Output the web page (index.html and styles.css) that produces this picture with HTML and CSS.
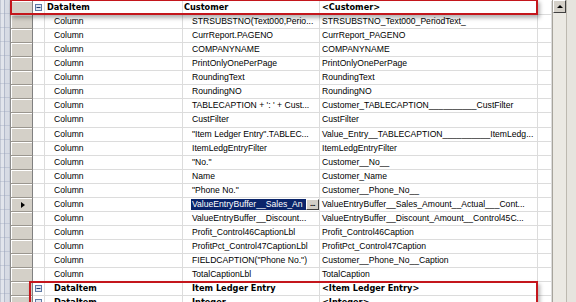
FILE: index.html
```html
<!DOCTYPE html>
<html>
<head>
<meta charset="utf-8">
<link rel="stylesheet" href="styles.css">
</head>
<body>
<div class="window">
  <div class="frame-left"></div>
  <div class="table">
    <div class="row top">
      <div class="sel"></div>
      <div class="exp"><svg width="7" height="7" viewBox="0 0 7 7"><rect x="0.5" y="0.5" width="6" height="6" fill="#dfe6f1" stroke="#5f7aa6"/><path d="M1.5 3.5H5.5" stroke="#1c3a6b"/></svg></div>
      <div class="c1 b">DataItem</div>
      <div class="c2 b">Customer</div>
      <div class="c3 b">&lt;Customer&gt;</div>
      <div class="cx"></div>
    </div>
    <div class="row"><div class="sel"></div><div class="exp"></div><div class="c1">Column</div><div class="c2">STRSUBSTNO(Text000,Perio...</div><div class="c3">STRSUBSTNO_Text000_PeriodText_</div><div class="cx"></div></div>
    <div class="row"><div class="sel"></div><div class="exp"></div><div class="c1">Column</div><div class="c2">CurrReport.PAGENO</div><div class="c3">CurrReport_PAGENO</div><div class="cx"></div></div>
    <div class="row"><div class="sel"></div><div class="exp"></div><div class="c1">Column</div><div class="c2">COMPANYNAME</div><div class="c3">COMPANYNAME</div><div class="cx"></div></div>
    <div class="row"><div class="sel"></div><div class="exp"></div><div class="c1">Column</div><div class="c2">PrintOnlyOnePerPage</div><div class="c3">PrintOnlyOnePerPage</div><div class="cx"></div></div>
    <div class="row"><div class="sel"></div><div class="exp"></div><div class="c1">Column</div><div class="c2">RoundingText</div><div class="c3">RoundingText</div><div class="cx"></div></div>
    <div class="row"><div class="sel"></div><div class="exp"></div><div class="c1">Column</div><div class="c2">RoundingNO</div><div class="c3">RoundingNO</div><div class="cx"></div></div>
    <div class="row"><div class="sel"></div><div class="exp"></div><div class="c1">Column</div><div class="c2">TABLECAPTION + ': ' + Cust...</div><div class="c3">Customer_TABLECAPTION__________CustFilter</div><div class="cx"></div></div>
    <div class="row tall"><div class="sel"></div><div class="exp"></div><div class="c1">Column</div><div class="c2">CustFilter</div><div class="c3">CustFilter</div><div class="cx"></div></div>
    <div class="row"><div class="sel"></div><div class="exp"></div><div class="c1">Column</div><div class="c2">"Item Ledger Entry".TABLEC...</div><div class="c3">Value_Entry__TABLECAPTION__________ItemLedg...</div><div class="cx"></div></div>
    <div class="row"><div class="sel"></div><div class="exp"></div><div class="c1">Column</div><div class="c2">ItemLedgEntryFilter</div><div class="c3">ItemLedgEntryFilter</div><div class="cx"></div></div>
    <div class="row"><div class="sel"></div><div class="exp"></div><div class="c1">Column</div><div class="c2">"No."</div><div class="c3">Customer__No__</div><div class="cx"></div></div>
    <div class="row"><div class="sel"></div><div class="exp"></div><div class="c1">Column</div><div class="c2">Name</div><div class="c3">Customer_Name</div><div class="cx"></div></div>
    <div class="row"><div class="sel"></div><div class="exp"></div><div class="c1">Column</div><div class="c2">"Phone No."</div><div class="c3">Customer__Phone_No__</div><div class="cx"></div></div>
    <div class="row current"><div class="sel"><span class="arrow"></span></div><div class="exp"></div><div class="c1">Column</div><div class="c2 editing"><span class="hl">ValueEntryBuffer__Sales_An</span><span class="assist">...</span></div><div class="c3">ValueEntryBuffer__Sales_Amount__Actual___Cont...</div><div class="cx"></div></div>
    <div class="row"><div class="sel"></div><div class="exp"></div><div class="c1">Column</div><div class="c2">ValueEntryBuffer__Discount...</div><div class="c3">ValueEntryBuffer__Discount_Amount__Control45C...</div><div class="cx"></div></div>
    <div class="row"><div class="sel"></div><div class="exp"></div><div class="c1">Column</div><div class="c2">Profit_Control46CaptionLbl</div><div class="c3">Profit_Control46Caption</div><div class="cx"></div></div>
    <div class="row"><div class="sel"></div><div class="exp"></div><div class="c1">Column</div><div class="c2">ProfitPct_Control47CaptionLbl</div><div class="c3">ProfitPct_Control47Caption</div><div class="cx"></div></div>
    <div class="row"><div class="sel"></div><div class="exp"></div><div class="c1">Column</div><div class="c2">FIELDCAPTION("Phone No.")</div><div class="c3">Customer__Phone_No__Caption</div><div class="cx"></div></div>
    <div class="row"><div class="sel"></div><div class="exp"></div><div class="c1">Column</div><div class="c2">TotalCaptionLbl</div><div class="c3">TotalCaption</div><div class="cx"></div></div>
    <div class="row">
      <div class="sel"></div>
      <div class="exp"><svg width="7" height="7" viewBox="0 0 7 7"><rect x="0.5" y="0.5" width="6" height="6" fill="#dfe6f1" stroke="#5f7aa6"/><path d="M1.5 3.5H5.5" stroke="#1c3a6b"/></svg></div>
      <div class="c1 b">DataItem</div><div class="c2 b">Item Ledger Entry</div><div class="c3 b">&lt;Item Ledger Entry&gt;</div><div class="cx"></div>
    </div>
    <div class="row">
      <div class="sel"></div>
      <div class="exp"><svg width="7" height="7" viewBox="0 0 7 7"><rect x="0.5" y="0.5" width="6" height="6" fill="#dfe6f1" stroke="#5f7aa6"/><path d="M1.5 3.5H5.5" stroke="#1c3a6b"/></svg></div>
      <div class="c1 b">DataItem</div><div class="c2 b">Integer</div><div class="c3 b">&lt;Integer&gt;</div><div class="cx"></div>
    </div>
  </div>
  <div class="vscroll">
    <div class="up"><span class="tri"></span></div>
    <div class="track"></div>
  </div>
  <div class="frame-right"></div>
  <div class="mark mark-top"></div>
  <div class="mark mark-bottom"></div>
</div>
</body>
</html>
```
FILE: styles.css
```css
html, body {
  margin: 0;
  padding: 0;
  background: #fff;
}
body {
  width: 576px;
  height: 302px;
  overflow: hidden;
  font-family: "Liberation Sans", Arial, sans-serif;
  font-size: 8.6px;
  color: #000;
}
.window {
  position: relative;
  display: flex;
  width: 576px;
  height: 302px;
  overflow: hidden;
  background: #fff;
}
.frame-left {
  width: 10px;
  flex: none;
  background:
    repeating-linear-gradient(to bottom, transparent 0 13px, rgba(150,160,185,0.35) 13px 14px),
    linear-gradient(to right, #c3c8d4 0 1px, #e2e5ec 1px 4px, #b3bacb 4px 5px, #d7dbe4 5px 9px, #c6cbd6 9px 10px);
}
.table {
  width: 542px;
  flex: none;
  padding-top: 1px;
  display: flex;
  flex-direction: column;
}
.row {
  display: grid;
  grid-template-columns: 23px 12px 138px 137px 218px 14px;
  height: 14px;
  flex: none;
}
.row.tall {
  height: 15px;
}
.row > div {
  box-sizing: border-box;
  border-bottom: 1px solid #dcdcdc;
  border-right: 1px solid #dcdcdc;
  overflow: hidden;
  white-space: nowrap;
  line-height: 13px;
}
.row > .sel {
  background: #d4d0c8;
  border-left: 1px solid #8c8c8c;
  border-right: 1px solid #808080;
  border-bottom: 1px solid #9a968f;
  box-shadow: inset 1px 1px 0 #ffffff;
  display: flex;
  align-items: center;
  justify-content: center;
}
.row > .exp {
  display: flex;
  align-items: center;
  padding-left: 2px;
}
.row > .exp svg {
  display: block;
}
.c1, .c2 {
  padding-left: 9px;
}
.c3 {
  padding-left: 2px;
}
.top .c1 {
  padding-left: 2px;
}
.top .c2 {
  padding-left: 1px;
}
.b {
  font-family: "DejaVu Sans", Verdana, sans-serif;
  font-weight: bold;
  font-size: 8.2px;
}
.arrow {
  display: block;
  width: 0;
  height: 0;
  border-top: 3px solid transparent;
  border-bottom: 3px solid transparent;
  border-left: 4px solid #000;
  margin-left: 2px;
}
.row > .editing {
  display: flex;
  padding-left: 8px;
  padding-top: 1px;
  padding-bottom: 1px;
  line-height: 11px;
}
.hl {
  flex: 1;
  min-width: 0;
  overflow: hidden;
  background: #0a246a;
  color: #fff;
  padding-left: 1px;
}
.assist {
  flex: none;
  width: 13px;
  box-sizing: border-box;
  background: #d4d0c8;
  border: 1px solid;
  border-color: #fff #404040 #404040 #fff;
  font-weight: bold;
  font-size: 8px;
  line-height: 7px;
  text-align: center;
  letter-spacing: -0.5px;
}
.vscroll {
  width: 15px;
  flex: none;
  display: flex;
  flex-direction: column;
  box-sizing: border-box;
  border-left: 1px solid #a7a49c;
  border-right: 1px solid #bdb9b0;
}
.up {
  height: 13px;
  flex: none;
  box-sizing: border-box;
  background: #d4d0c8;
  border: 1px solid;
  border-color: #ffffff #404040 #404040 #ffffff;
  display: flex;
  align-items: center;
  justify-content: center;
}
.tri {
  display: block;
  width: 0;
  height: 0;
  border-left: 3px solid transparent;
  border-right: 3px solid transparent;
  border-bottom: 3px solid #000;
}
.track {
  flex: 1;
  background: #ebe9e3;
}
.frame-right {
  width: 9px;
  flex: none;
  background: #e6e4de;
}
.mark {
  position: absolute;
  box-sizing: border-box;
  border: 2px solid #c4161c;
  box-shadow: 2px 3px 4px rgba(0, 0, 0, 0.3);
}
.mark-top {
  left: 10px;
  top: -1px;
  width: 528px;
  height: 16px;
}
.mark-bottom {
  left: 29px;
  top: 281px;
  width: 509px;
  height: 40px;
}
```
